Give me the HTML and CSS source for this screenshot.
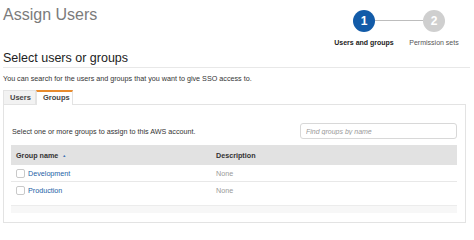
FILE: index.html
```html
<!DOCTYPE html>
<html>
<head>
    <meta charset="utf-8"/>
    <title>Assign Users</title>
    <link rel="stylesheet" href="styles.css">
</head>
<body>
<div class="page">
    <header class="top">
        <h1 class="title">Assign Users</h1>
        <div class="stepper">
            <div class="step active">
                <span class="circle">1</span>
                <span class="label">Users and groups</span>
            </div>
            <div class="step">
                <span class="circle">2</span>
                <span class="label">Permission sets</span>
            </div>
        </div>
    </header>

    <h2 class="section-title">Select users or groups</h2>
    <p class="intro">You can search for the users and groups that you want to give SSO access to.</p>

    <div class="tabs">
        <div class="tab">Users</div>
        <div class="tab selected">Groups</div>
    </div>

    <div class="panel">
        <div class="toolbar">
            <span>Select one or more groups to assign to this AWS account.</span>
            <input class="search" type="text" placeholder="Find groups by name">
        </div>

        <table class="groups">
            <thead>
            <tr>
                <th class="name-col">Group name <span class="sort">&#9650;</span></th>
                <th>Description</th>
            </tr>
            </thead>
            <tbody>
            <tr>
                <td><span class="check"></span><a href="#">Development</a></td>
                <td class="muted">None</td>
            </tr>
            <tr>
                <td><span class="check"></span><a href="#">Production</a></td>
                <td class="muted">None</td>
            </tr>
            </tbody>
        </table>

        <div class="table-footer"></div>
    </div>
</div>
</body>
</html>
```

FILE: styles.css
```css
body {
    margin: 0;
    background: #fff;
    font-family: "Liberation Sans", Arial, sans-serif;
    color: #333;
}

.page {
    padding: 0 5px 0 3px;
}

.top {
    display: flex;
    justify-content: space-between;
    align-items: flex-start;
    height: 51px;
}

.title {
    margin: 6px 0 0;
    font-size: 16px;
    font-weight: normal;
    color: #7b7b7b;
}

.stepper {
    display: flex;
    padding-top: 10px;
}

.step {
    position: relative;
    width: 70px;
    display: flex;
    flex-direction: column;
    align-items: center;
}

.step:not(:last-child)::after {
    content: "";
    position: absolute;
    top: 10px;
    left: calc(50% + 11px);
    width: 48px;
    height: 1px;
    background: #bdbdbd;
}

.circle {
    width: 22px;
    height: 22px;
    border-radius: 50%;
    background: #cfcfcf;
    color: #fff;
    font-weight: bold;
    font-size: 12px;
    line-height: 22px;
    text-align: center;
}

.step.active .circle {
    background: #125ba8;
}

.label {
    margin-top: 7px;
    font-size: 7px;
    color: #555;
    white-space: nowrap;
}

.step.active .label {
    font-weight: bold;
    color: #222;
}

.section-title {
    margin: 0 -1px 0 0;
    padding-bottom: 2px;
    font-size: 12.5px;
    font-weight: normal;
    color: #222;
    line-height: 14px;
    border-bottom: 1px solid #e8e8e8;
}

.intro {
    margin: 6px 0 0;
    font-size: 7.2px;
    line-height: 9px;
    color: #333;
}

.tabs {
    display: flex;
    margin-top: 7px;
}

.tab {
    height: 14px;
    line-height: 14px;
    padding: 0 6px;
    font-size: 7.5px;
    font-weight: bold;
    color: #444;
    background: #f2f2f2;
    border: 1px solid #e3e3e3;
    border-bottom: none;
    box-sizing: border-box;
    width: 33px;
    text-align: center;
}

.tab.selected {
    width: 37px;
    background: #fff;
    border-top: 2px solid #e88b2e;
    line-height: 12px;
    margin-bottom: -1px;
    height: 15px;
    z-index: 1;
}

.panel {
    width: 463px;
    box-sizing: border-box;
    border: 1px solid #e3e3e3;
    padding: 18px 8px 9px 7px;
}

.toolbar {
    display: flex;
    justify-content: space-between;
    align-items: center;
    font-size: 7.2px;
    color: #333;
    padding-left: 1px;
}

.search {
    width: 157px;
    height: 16px;
    box-sizing: border-box;
    border: 1px solid #d8d8d8;
    border-radius: 3px;
    padding: 0 5px;
    font-family: "Liberation Sans", Arial, sans-serif;
    font-size: 7px;
    font-style: italic;
    outline: none;
}

.search::placeholder {
    color: #999;
}

.groups {
    width: 446px;
    margin-top: 6px;
    border-collapse: collapse;
    font-size: 7.2px;
}

.groups th {
    height: 20px;
    background: #e2e2e2;
    text-align: left;
    font-weight: bold;
    color: #333;
    padding: 0 0 0 5px;
}

.groups th.name-col {
    width: 195px;
}

.sort {
    font-size: 4px;
    color: #3e74b5;
    margin-left: 2px;
    vertical-align: middle;
}

.groups td {
    height: 16px;
    padding: 0 0 0 5px;
    border-bottom: 1px solid #e8e8e8;
}

.groups tr:last-child td {
    border-bottom: none;
}

.check {
    display: inline-block;
    width: 7px;
    height: 7px;
    border: 1px solid #c9c9c9;
    border-radius: 2px;
    vertical-align: middle;
    margin-right: 3px;
}

.groups a {
    color: #1c5fa6;
    text-decoration: none;
    vertical-align: middle;
}

.muted {
    color: #999;
}

.table-footer {
    margin-top: 7px;
    height: 7px;
    background: #f7f7f7;
    border-top: 1px solid #ececec;
}
```
